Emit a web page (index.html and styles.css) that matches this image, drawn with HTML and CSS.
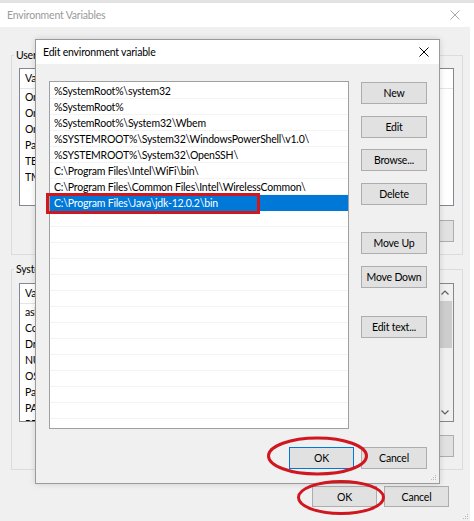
FILE: index.html
```html
<!DOCTYPE html>
<html lang="en">

<head>
    <meta charset="UTF-8">
    <meta name="viewport" content="width=device-width, initial-scale=1.0">
    <title>Environment Variables</title>
    <link rel="stylesheet" href="styles.css">
</head>

<body>
    <div class="screen">
        <!-- Parent window (inactive) -->
        <div class="window env-window">
            <div class="titlebar">
                <span class="title">Environment Variables</span>
                <svg class="close" width="10" height="10" viewBox="0 0 10 10">
                    <path d="M0.5 0.5L9.5 9.5M9.5 0.5L0.5 9.5" />
                </svg>
            </div>
            <div class="window-body">
                <fieldset class="group">
                    <legend>User variables for admin</legend>
                    <div class="listview">
                        <div class="lv-items">
                            <div class="lv-row lv-head"><span class="col-name">Variable</span><span class="col-value">Value</span></div>
                            <div class="lv-row"><span class="col-name">OneDrive</span><span class="col-value">C:\Users\admin\OneDrive</span></div>
                            <div class="lv-row"><span class="col-name">OneDriveCommercial</span><span class="col-value">C:\Users\admin\OneDrive</span></div>
                            <div class="lv-row"><span class="col-name">OneDriveConsumer</span><span class="col-value">C:\Users\admin\OneDrive</span></div>
                            <div class="lv-row"><span class="col-name">Path</span><span class="col-value">C:\Users\admin\AppData\Local</span></div>
                            <div class="lv-row"><span class="col-name">TEMP</span><span class="col-value">C:\Users\admin\AppData\Local\Temp</span></div>
                            <div class="lv-row"><span class="col-name">TMP</span><span class="col-value">C:\Users\admin\AppData\Local\Temp</span></div>
                        </div>
                    </div>
                    <div class="group-buttons">
                        <button class="btn">New...</button>
                        <button class="btn">Edit...</button>
                        <button class="btn">Delete</button>
                    </div>
                </fieldset>

                <fieldset class="group system">
                    <legend>System variables</legend>
                    <div class="listview">
                        <div class="lv-items">
                            <div class="lv-row lv-head"><span class="col-name">Variable</span><span class="col-value">Value</span></div>
                            <div class="lv-row"><span class="col-name">asl.log</span><span class="col-value">Destination=file</span></div>
                            <div class="lv-row"><span class="col-name">ComSpec</span><span class="col-value">C:\WINDOWS\system32\cmd.exe</span></div>
                            <div class="lv-row"><span class="col-name">DriverData</span><span class="col-value">C:\Windows\System32\Drivers</span></div>
                            <div class="lv-row"><span class="col-name">NUMBER_OF_PROCESSORS</span><span class="col-value">4</span></div>
                            <div class="lv-row"><span class="col-name">OS</span><span class="col-value">Windows_NT</span></div>
                            <div class="lv-row"><span class="col-name">Path</span><span class="col-value">C:\WINDOWS\system32</span></div>
                            <div class="lv-row"><span class="col-name">PATHEXT</span><span class="col-value">.COM;.EXE;.BAT;.CMD</span></div>
                            <div class="lv-row"><span class="col-name">PROCESSOR_ARCHITECTURE</span><span class="col-value">AMD64</span></div>
                        </div>
                        <div class="scrollbar">
                            <svg class="arrow" width="8" height="5" viewBox="0 0 8 5"><path d="M0.5 4.5L4 1L7.5 4.5" /></svg>
                            <div class="track"><div class="thumb"></div></div>
                            <svg class="arrow" width="8" height="5" viewBox="0 0 8 5"><path d="M0.5 0.5L4 4L7.5 0.5" /></svg>
                        </div>
                    </div>
                    <div class="group-buttons">
                        <button class="btn">New...</button>
                        <button class="btn">Edit...</button>
                        <button class="btn">Delete</button>
                    </div>
                </fieldset>

                <div class="dialog-buttons outer-buttons">
                    <button class="btn">OK</button>
                    <button class="btn">Cancel</button>
                </div>
            </div>
            <svg class="grip outer-grip" width="6" height="6" viewBox="0 0 6 6">
                <rect x="4" y="0" width="1" height="1" /><rect x="2" y="2" width="1" height="1" /><rect x="4" y="2" width="1" height="1" />
                <rect x="0" y="4" width="1" height="1" /><rect x="2" y="4" width="1" height="1" /><rect x="4" y="4" width="1" height="1" />
            </svg>
        </div>

        <!-- Child dialog on top -->
        <div class="window edit-window">
            <div class="titlebar">
                <span class="title">Edit environment variable</span>
                <svg class="close" width="10" height="10" viewBox="0 0 10 10">
                    <path d="M0.5 0.5L9.5 9.5M9.5 0.5L0.5 9.5" />
                </svg>
            </div>
            <div class="edit-body">
                <div class="edit-main">
                    <div class="path-list">
                        <div class="path-row">%SystemRoot%\system32</div>
                        <div class="path-row">%SystemRoot%</div>
                        <div class="path-row">%SystemRoot%\System32\Wbem</div>
                        <div class="path-row">%SYSTEMROOT%\System32\WindowsPowerShell\v1.0\</div>
                        <div class="path-row">%SYSTEMROOT%\System32\OpenSSH\</div>
                        <div class="path-row">C:\Program Files\Intel\WiFi\bin\</div>
                        <div class="path-row">C:\Program Files\Common Files\Intel\WirelessCommon\</div>
                        <div class="path-row selected">C:\Program Files\Java\jdk-12.0.2\bin</div>
                    </div>
                    <div class="side-buttons">
                        <button class="btn">New</button>
                        <button class="btn">Edit</button>
                        <button class="btn">Browse...</button>
                        <button class="btn">Delete</button>
                        <button class="btn move-up">Move Up</button>
                        <button class="btn">Move Down</button>
                        <button class="btn edit-text">Edit text...</button>
                    </div>
                </div>
                <div class="dialog-buttons inner-buttons">
                    <button class="btn default">OK</button>
                    <button class="btn">Cancel</button>
                </div>
            </div>
            <svg class="grip inner-grip" width="6" height="6" viewBox="0 0 6 6">
                <rect x="4" y="0" width="1" height="1" /><rect x="2" y="2" width="1" height="1" /><rect x="4" y="2" width="1" height="1" />
                <rect x="0" y="4" width="1" height="1" /><rect x="2" y="4" width="1" height="1" /><rect x="4" y="4" width="1" height="1" />
            </svg>
        </div>

        <!-- Red annotation marks -->
        <svg class="marks" width="474" height="521" viewBox="0 0 474 521">
            <rect x="47.5" y="194.5" width="211" height="18" />
            <ellipse cx="317.5" cy="456" rx="49" ry="18" />
            <ellipse cx="341" cy="497.5" rx="42.5" ry="16" />
        </svg>
    </div>
</body>

</html>
```

FILE: styles.css
```css
/* Global Styles */
body {
    margin: 0;
    font-family: "Segoe UI", Lato, "Noto Sans", sans-serif;
    font-size: 10.5px;
    letter-spacing: -0.2px;
    color: #000;
    background-color: #fff;
}

.screen {
    position: relative;
    width: 474px;
    height: 521px;
    overflow: hidden;
    border-top: 3px solid #e2e2e2;
    box-sizing: border-box;
}

.window {
    background-color: #f0f0f0;
    box-sizing: border-box;
}

.titlebar {
    display: flex;
    align-items: center;
    justify-content: space-between;
    background-color: #fff;
}

.close path {
    fill: none;
    stroke: #000;
    stroke-width: 1;
}

.btn {
    font-family: inherit;
    font-size: 10.5px;
    letter-spacing: -0.2px;
    color: #000;
    background-color: #e1e1e1;
    border: 1px solid #adadad;
    padding: 0;
    height: 22px;
    border-radius: 0;
    white-space: nowrap;
}

.grip rect {
    fill: #b8b8b8;
}

/* Parent window */
.env-window {
    position: relative;
    width: 470px;
    height: 518px;
}

.env-window .titlebar {
    height: 24px;
    padding: 0 10px 0 7px;
}

.env-window .title {
    color: #9a9a9a;
}

.env-window .close path {
    stroke: #a8a8a8;
}

.window-body {
    padding: 20px 7px 0 11px;
}

.group {
    margin: 0;
    padding: 5px 8px 12px 7px;
    border: 1px solid #dcdcdc;
}

.group legend {
    margin-left: -5px;
    padding: 0 2px;
    line-height: 16px;
}

.group.system {
    margin-top: 6px;
    padding-top: 6px;
}

.listview {
    display: flex;
    height: 138px;
    background-color: #fff;
    border: 1px solid #828790;
    box-sizing: border-box;
    overflow: hidden;
}

.system .listview {
    height: 139px;
}

.lv-items {
    flex: 1;
}

.lv-row {
    display: flex;
    height: 16px;
    line-height: 16px;
    padding-left: 5px;
    white-space: nowrap;
}

.lv-head {
    height: 19px;
    line-height: 19px;
    border-bottom: 1px solid #e5e5e5;
}

.col-name {
    width: 150px;
    overflow: hidden;
}

.col-value {
    width: 230px;
    overflow: hidden;
}

.scrollbar {
    display: flex;
    flex-direction: column;
    align-items: center;
    width: 16px;
    background-color: #f0f0f0;
}

.scrollbar .arrow {
    margin: 6px 0;
}

.scrollbar .arrow path {
    fill: none;
    stroke: #606060;
    stroke-width: 1.2;
}

.track {
    flex: 1;
    width: 100%;
    padding: 0 1px;
    box-sizing: border-box;
}

.thumb {
    height: 47px;
    background-color: #cdcdcd;
}

.group-buttons {
    display: flex;
    justify-content: flex-end;
    gap: 8px;
    margin-top: 14px;
}

.group-buttons .btn {
    width: 75px;
}

.system .group-buttons {
    margin-top: 13px;
}

.dialog-buttons {
    display: flex;
    justify-content: flex-end;
    gap: 7px;
}

.outer-buttons {
    margin-top: 16px;
    padding-right: 14px;
}

.outer-buttons .btn {
    width: 65px;
    height: 21px;
}

.outer-grip {
    position: absolute;
    right: 1px;
    bottom: 1px;
}

/* Child dialog */
.edit-window {
    position: absolute;
    left: 35px;
    top: 36px;
    width: 405px;
    height: 445px;
    border: 1px solid #9a9a9a;
    box-shadow: 0 0 6px rgba(0, 0, 0, 0.15);
}

.edit-window .titlebar {
    height: 24px;
    padding: 0 10px 0 7px;
}

.edit-body {
    padding: 17px 12px 0 13px;
}

.edit-main {
    display: flex;
    gap: 12px;
}

.path-list {
    width: 300px;
    height: 348px;
    box-sizing: border-box;
    padding-top: 1px;
    border: 1px solid #a0a0a0;
    background: repeating-linear-gradient(to bottom, #fff 0 15px, #f3f3f3 15px 16px);
    background-position: 0 1px;
}

.path-row {
    height: 16px;
    line-height: 16px;
    padding-left: 4px;
    white-space: nowrap;
    overflow: hidden;
}

.path-row.selected {
    background-color: #0078d7;
    color: #fff;
}

.side-buttons {
    display: flex;
    flex-direction: column;
    width: 66px;
    padding-top: 1px;
}

.side-buttons .btn {
    margin-bottom: 12px;
}

.side-buttons .btn:nth-child(2) {
    margin-bottom: 11px;
}

.side-buttons .btn.move-up {
    margin-top: 15px;
}

.side-buttons .btn.edit-text {
    margin-top: 16px;
}

.inner-buttons {
    margin-top: 18px;
}

.inner-buttons .btn {
    width: 66px;
}

.inner-buttons .btn.default {
    width: 65px;
    border-color: #0078d7;
}

.inner-grip {
    position: absolute;
    right: 2px;
    bottom: 2px;
}

/* Annotations */
.marks {
    position: absolute;
    left: 0;
    top: -3px;
    pointer-events: none;
}

.marks rect,
.marks ellipse {
    fill: none;
    stroke: #d0161f;
    stroke-width: 3;
}
```
